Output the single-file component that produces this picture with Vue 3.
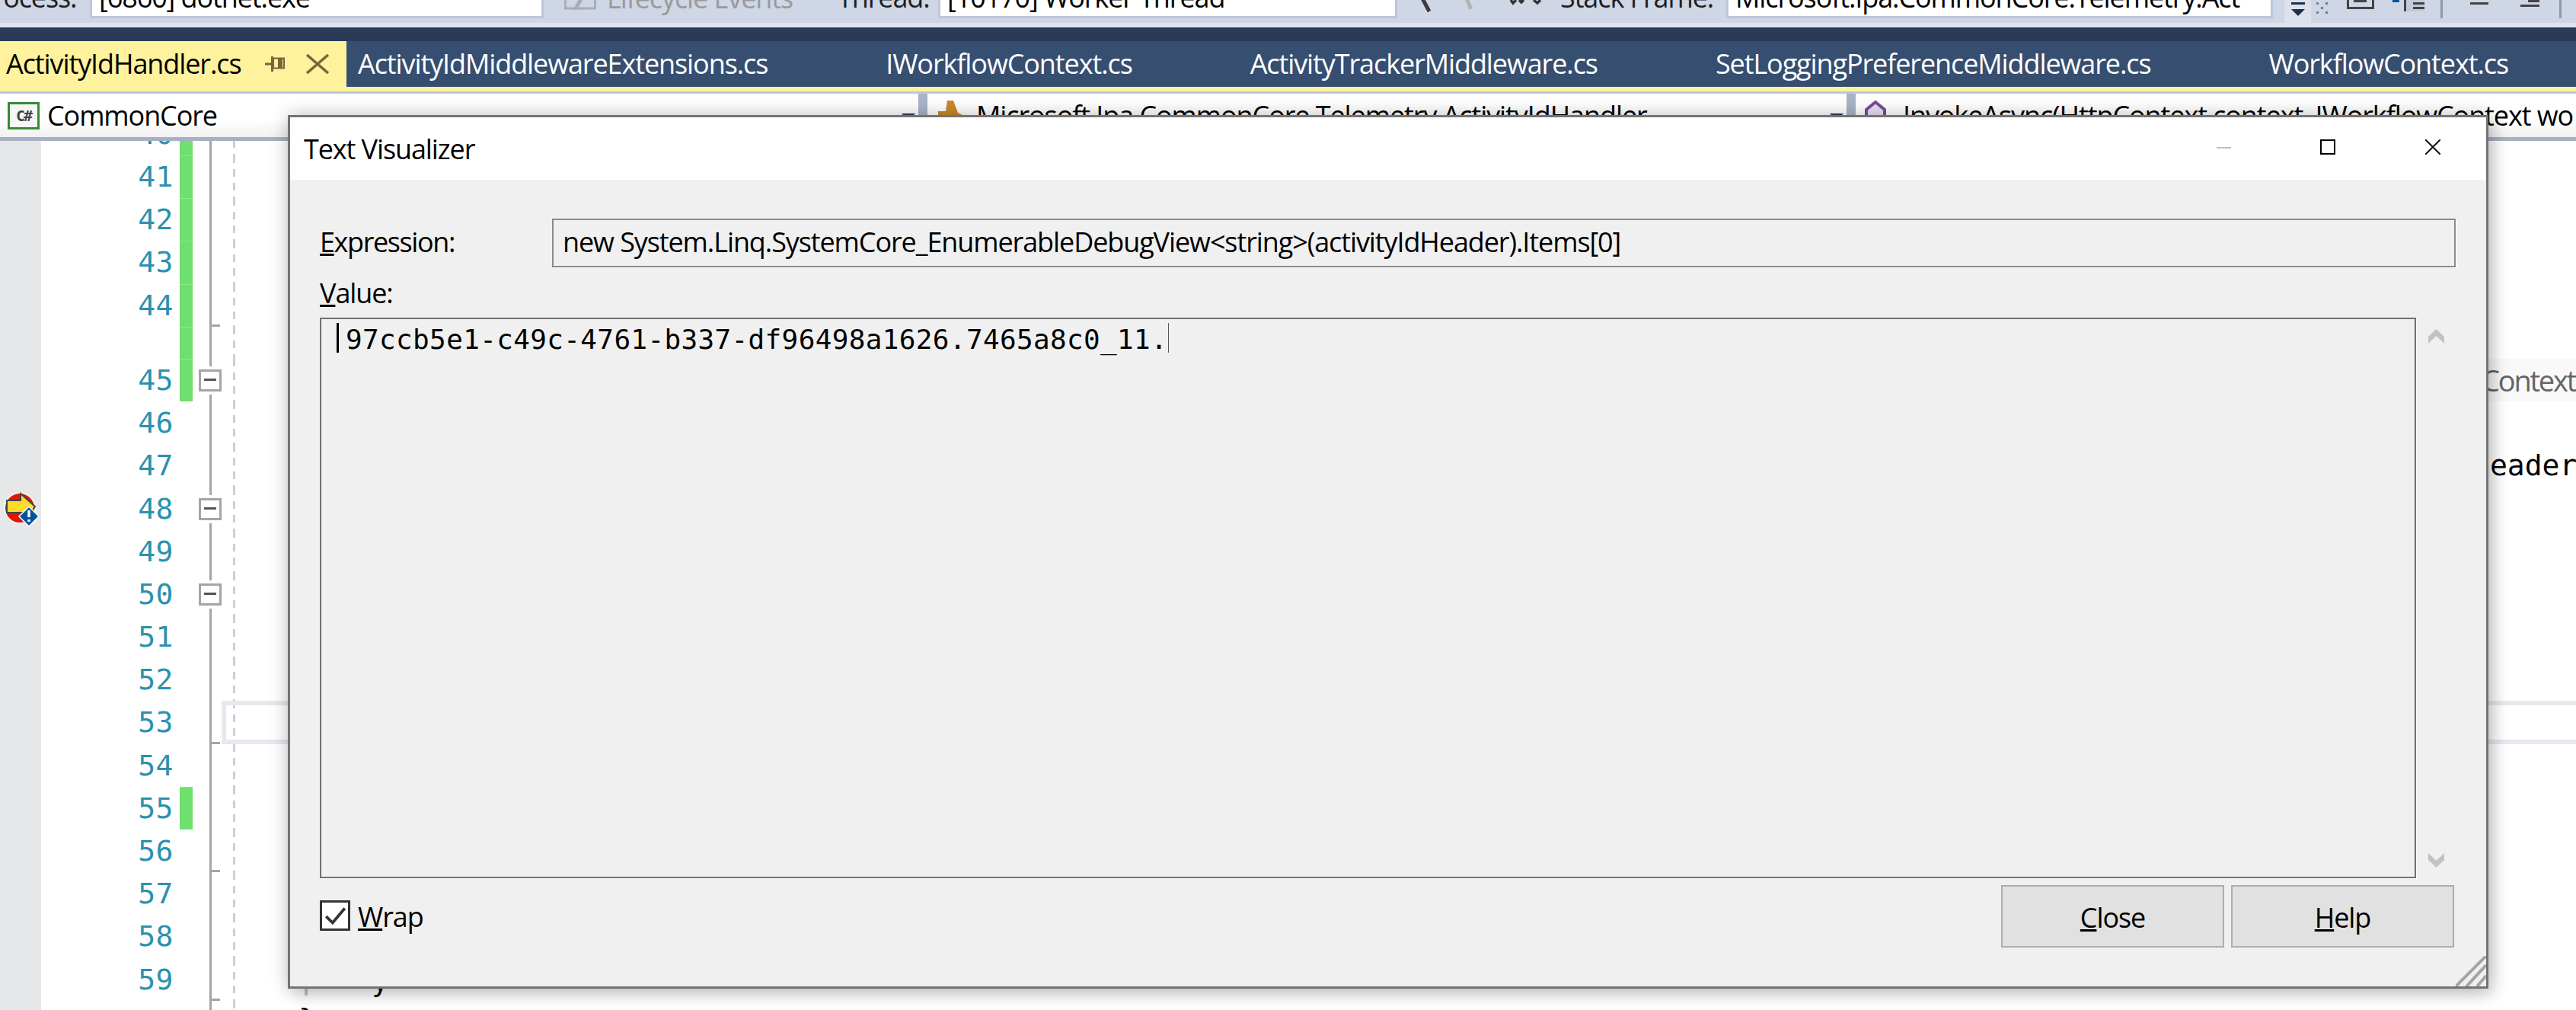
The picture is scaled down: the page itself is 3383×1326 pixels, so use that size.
<script setup>
const rows = [
  { n: 40, h: 56.2, ch: true, fold: 'line' },
  { n: 41, h: 56.2, ch: true, fold: 'line' },
  { n: 42, h: 56.2, ch: true, fold: 'line' },
  { n: 43, h: 56.2, ch: true, fold: 'line' },
  { n: 44, h: 56.2, ch: true, fold: 'tick' },
  { n: '', h: 42.2, ch: true, fold: 'line' },
  { n: 45, h: 56.2, ch: true, fold: 'box', code: 'Context', cls: 'dim' },
  { n: 46, h: 56.2, fold: 'line' },
  { n: 47, h: 56.2, fold: 'line', code: 'Header', cls: 'dark' },
  { n: 48, h: 56.2, fold: 'box', bp: true },
  { n: 49, h: 56.2, fold: 'line' },
  { n: 50, h: 56.2, fold: 'box' },
  { n: 51, h: 56.2, fold: 'line' },
  { n: 52, h: 56.2, fold: 'line' },
  { n: 53, h: 56.2, fold: 'tick', current: true },
  { n: 54, h: 56.2, fold: 'line' },
  { n: 55, h: 56.2, ch: true, fold: 'line' },
  { n: 56, h: 56.2, fold: 'tick' },
  { n: 57, h: 56.2, fold: 'line' },
  { n: 58, h: 56.2, fold: 'line' },
  { n: 59, h: 56.2, fold: 'tick' },
  { n: 60, h: 56.2, fold: 'line' }
]
const tabs = [
  'ActivityIdMiddlewareExtensions.cs',
  'IWorkflowContext.cs',
  'ActivityTrackerMiddleware.cs',
  'SetLoggingPreferenceMiddleware.cs',
  'WorkflowContext.cs'
]
</script>

<template>
  <div class="ide">
    <header class="toolbar">
      <span class="tb-label first">Process:</span>
      <span class="combo c1"><span class="combo-text">[6860] dotnet.exe</span></span>
      <span class="lifecycle">
        <svg class="lc-ico" viewBox="0 0 42 25"><rect x="1.5" y="-8" width="39" height="31" fill="none" stroke="#a9adb6" stroke-width="3"/><path d="M14 25 27 2" stroke="#a9adb6" stroke-width="5"/></svg>
        Lifecycle Events
      </span>
      <span class="tb-label thread">Thread:</span>
      <span class="combo c2"><span class="combo-text">[10170] Worker Thread</span></span>
      <svg class="flags" viewBox="0 0 214 30">
        <path d="M33 -2 42 15" stroke="#3c3c3c" stroke-width="5" fill="none"/>
        <path d="M91 -2 97 12" stroke="#b4b4b4" stroke-width="5" fill="none"/>
        <path d="M149 0l3 4 4-4M160 0l3 3 3-3M179 0l5 4 4-4" stroke="#333" stroke-width="3.5" fill="none"/>
      </svg>
      <span class="tb-label frame">Stack Frame:</span>
      <span class="combo c3"><span class="combo-text">Microsoft.Ipa.CommonCore.Telemetry.Act</span></span>
      <span class="overflow">
        <i class="ov-dash"></i>
        <i class="ov-tri"></i>
      </span>
      <svg class="tb-icons" viewBox="0 0 348 30">
        <g fill="#6b7a94">
          <rect x="7" y="3" width="3" height="3"/><rect x="19" y="3" width="3" height="3"/>
          <rect x="13" y="9" width="3" height="3"/>
          <rect x="7" y="15" width="3" height="3"/><rect x="19" y="15" width="3" height="3"/>
        </g>
        <path d="M48.5 -4v14.5h33V-4" fill="none" stroke="#444" stroke-width="3"/>
        <rect x="56" y="0" width="17" height="3" fill="#444"/>
        <rect x="107" y="0" width="9" height="3" fill="#00539c"/>
        <rect x="125" y="0" width="24" height="15" fill="#c3cad9"/>
        <rect x="122" y="0" width="3" height="15" fill="#444"/>
        <rect x="134" y="3" width="15" height="3" fill="#444"/>
        <rect x="134" y="9" width="15" height="3" fill="#444"/>
        <rect x="170" y="0" width="3" height="24" fill="#8d98ac"/>
        <rect x="209" y="3" width="24" height="3" fill="#444"/>
        <rect x="285" y="0" width="15" height="3" fill="#444"/>
        <rect x="275" y="6" width="25" height="3" fill="#444"/>
        <rect x="326" y="0" width="3" height="24" fill="#8d98ac"/>
      </svg>
    </header>
    <div class="band-light"></div>
    <div class="band-dark"></div>

    <nav class="tabs">
      <div class="tab active">
        <span>ActivityIdHandler.cs</span>
        <svg class="pin" viewBox="0 0 26 20"><path d="M0 10h8" stroke="#75663c" stroke-width="3"/><rect x="8" y="0" width="3" height="20" fill="#75663c"/><path d="M11 2.5h14v13H11z" fill="none" stroke="#75663c" stroke-width="2"/><rect x="17" y="3" width="6" height="12" fill="#75663c"/></svg>
        <svg class="tab-x" viewBox="0 0 32 26"><path d="M2 1 30 25M30 1 2 25" stroke="#75663c" stroke-width="3.5" fill="none"/></svg>
      </div>
      <div class="tab-rest">
        <span v-for="t in tabs" :key="t" class="tab">{{ t }}</span>
      </div>
    </nav>
    <div class="band-yellow"></div>
    <div class="band-blue"></div>

    <div class="navbar">
      <div class="nav-cell n1">
        <span class="cs-ico">C#</span>
        <span>CommonCore</span>
        <i class="nav-arrow"></i>
      </div>
      <div class="nav-cell n2">
        <svg class="nav-ico" viewBox="0 0 42 40"><path d="M14 0h8l6 16 8 4v8H2V14h10z" fill="#c98a2a"/><rect x="8" y="28" width="6" height="10" fill="#c98a2a"/><rect x="26" y="28" width="6" height="10" fill="#c98a2a"/></svg>
        <span>Microsoft.Ipa.CommonCore.Telemetry.ActivityIdHandler</span>
        <i class="nav-arrow"></i>
      </div>
      <div class="nav-cell n3">
        <svg class="nav-ico small" viewBox="0 0 28 40"><path d="M14 2 26 12v22H2V12z" fill="#e8dff0" stroke="#7a4b9d" stroke-width="4"/></svg>
        <span>InvokeAsync(HttpContext context, IWorkflowContext wo</span>
      </div>
    </div>
    <div class="band-grey"></div>

    <main class="editor">
      <div class="editor-rows">
        <div v-for="(r, i) in rows" :key="i" class="row" :class="{ current: r.current }" :style="{ height: r.h + 'px' }">
          <div class="gutter">
            <svg v-if="r.bp" class="bp" viewBox="0 0 46 46">
              <circle cx="21" cy="21" r="20" fill="#e51400" stroke="#f5f5f5" stroke-width="2"/>
              <path d="M4 27V11h18V2l19 17-5 8z" fill="#ffd92e" stroke="#444" stroke-width="2"/>
              <path d="M33 19 46 32 33 45 20 32z" fill="#00539c" stroke="#fff" stroke-width="1.5"/>
              <path d="M33 24v9M33 36v3" stroke="#fff" stroke-width="3.5"/>
            </svg>
          </div>
          <div class="num">{{ r.n }}</div>
          <div class="change" :class="{ on: r.ch }"></div>
          <div class="fold" :class="r.fold"><i v-if="r.fold === 'box'" class="fold-box"></i></div>
          <div class="code" :class="r.cls">
            <span v-if="r.code" class="code-text">{{ r.code }}</span>
          </div>
        </div>
      </div>
      <span class="stray guide"></span>
      <span class="stray descender">y</span>
      <span class="stray brace">}</span>
    </main>

    <section class="dialog">
      <div class="title-bar">
        <span class="title">Text Visualizer</span>
        <i class="win-min"></i>
        <i class="win-max"></i>
        <svg class="win-x" viewBox="0 0 20 20"><path d="M0 0 20 20M20 0 0 20" stroke="#111" stroke-width="2"/></svg>
      </div>
      <div class="body">
        <div class="expr-row">
          <label class="lbl"><u>E</u>xpression:</label>
          <div class="expr-box">new System.Linq.SystemCore_EnumerableDebugView&lt;string&gt;(activityIdHeader).Items[0]</div>
        </div>
        <label class="lbl value-lbl"><u>V</u>alue:</label>
        <div class="value-row">
          <div class="value-box">
            <i class="caret"></i><span class="val-text">97ccb5e1-c49c-4761-b337-df96498a1626.7465a8c0_11.</span><i class="caret thin"></i>
          </div>
          <div class="scroll">
            <svg viewBox="0 0 21 19"><path d="M0 10 10.5 0 21 10v9L10.5 9 0 19z" fill="#c2c2c2"/></svg>
            <svg viewBox="0 0 21 19"><path d="M0 0 10.5 10 21 0v9L10.5 19 0 9z" fill="#c2c2c2"/></svg>
          </div>
        </div>
        <div class="foot">
          <label class="wrap">
            <span class="check"><svg viewBox="0 0 32 32"><path d="M5 17 13 25 28 7" stroke="#333" stroke-width="3.5" fill="none"/></svg></span>
            <span><u>W</u>rap</span>
          </label>
          <div class="btns">
            <button class="btn"><u>C</u>lose</button>
            <button class="btn"><u>H</u>elp</button>
          </div>
        </div>
        <svg class="grip" viewBox="0 0 40 40"><path d="M0 40 40 0M14 40 40 12M28 40 40 26" stroke="#a3a3a3" stroke-width="4"/></svg>
      </div>
    </section>
  </div>
</template>

<style scoped>
.ide { position: relative; width: 3383px; height: 1326px; overflow: hidden; background: #fff; font-family: "Open Sans", "Noto Sans", sans-serif; font-size: 36px; color: #000; letter-spacing: -1.1px; }

.toolbar { height: 30px; background: #cfd6e5; display: flex; align-items: flex-start; overflow: hidden; white-space: nowrap; }
.tb-label { line-height: 30px; margin-top: -18px; flex: none; color: #1e1e1e; }
.tb-label.first { width: 118px; margin-left: -30px; }
.combo { flex: none; height: 24px; background: #fff; box-shadow: inset 3px 0 0 #bcc7db, inset 0 -3px 0 #bcc7db, inset -3px 0 0 #bcc7db; padding-left: 12px; box-sizing: border-box; }
.combo-text { display: block; line-height: 0; margin-top: -3px; }
.c1 { width: 596px; margin-left: 30px; }
.c2 { width: 603px; }
.c3 { width: 718px; margin-left: 20px; }
.lifecycle { flex: none; display: flex; align-items: center; gap: 14px; margin-left: 27px; width: 359px; height: 0; margin-top: -3px; color: #9a9a9a; }
.lc-ico { width: 42px; height: 25px; position: relative; top: 3px; flex: none; }
.tb-label.thread { width: 132px; }
.flags { width: 214px; height: 30px; flex: none; }
.tb-label.frame { width: 198px; }
.overflow { flex: none; width: 35px; height: 30px; margin-left: 15px; background: #dde1ec; position: relative; }
.ov-dash { position: absolute; left: 9px; top: 3px; width: 18px; height: 3px; background: #1f2f4c; }
.ov-tri { position: absolute; left: 9px; top: 12px; border: 9px solid transparent; border-top: 9px solid #1f2f4c; border-bottom: 0; }
.tb-icons { width: 348px; height: 30px; flex: none; }

.band-light { height: 6px; background: #dfe3ee; }
.band-dark { height: 18px; background: #2a3a58; }
.tabs { height: 60px; background: #364e70; display: flex; color: #fff; white-space: nowrap; align-items: stretch; }
.tab { line-height: 60px; flex: none; }
.tab.active { width: 455px; box-sizing: border-box; padding-left: 8px; background: #fff29d; color: #000; display: flex; align-items: center; }
.pin { width: 26px; height: 20px; margin-left: 32px; flex: none; }
.tab-x { width: 32px; height: 26px; margin-left: 27px; flex: none; }
.tab-rest { display: flex; gap: 155px; padding-left: 15px; }
.band-yellow { height: 6px; background: #fff29d; }
.band-blue { height: 3px; background: #bcc7db; }

.navbar { height: 57px; display: flex; background: #a9b4c8; gap: 12px; white-space: nowrap; }
.nav-cell { flex: none; display: flex; align-items: center; background: linear-gradient(#fff 60%, #f1f1f1); position: relative; overflow: hidden; box-sizing: border-box; }
.n1 { width: 1206px; padding-left: 10px; }
.n2 { width: 1207px; padding-left: 12px; }
.n3 { flex: 1; padding-left: 12px; }
.cs-ico { width: 42px; height: 36px; box-sizing: border-box; border: 3px solid #388a34; background: #f6f6f6; color: #424242; font: bold 20px/30px "DejaVu Sans Mono", monospace; letter-spacing: -2px; text-align: center; margin-right: 10px; flex: none; }
.nav-ico { width: 42px; height: 40px; margin-right: 10px; flex: none; }
.nav-ico.small { width: 28px; margin-right: 22px; }
.nav-arrow { position: absolute; right: 4px; top: 26px; border: 9px solid transparent; border-top: 10px solid #2c3a55; border-bottom: 0; }
.band-grey { height: 5px; background: #a6b1c4; }

.editor { position: relative; height: 1141px; overflow: hidden; background: #fff; }
.editor-rows { margin-top: -37.2px; }
.row { display: flex; position: relative; box-sizing: border-box; }
.gutter { width: 54px; flex: none; background: #e6e7e8; position: relative; }
.bp { position: absolute; left: 5px; top: 6px; width: 46px; height: 46px; }
.num { width: 174px; flex: none; text-align: right; color: #2b91af; font: 38px/56px "DejaVu Sans Mono", monospace; letter-spacing: 0.5px; }
.change { width: 17px; margin-left: 8px; flex: none; box-sizing: border-box; }
.change.on { background: #6ee06e; border-top: 1px solid #8ce78c; }
.fold { width: 38px; flex: none; position: relative; }
.fold::before { content: ""; position: absolute; left: 22px; top: 0; bottom: 0; width: 3px; background: #a5a5a5; }
.fold.tick::after { content: ""; position: absolute; left: 22px; bottom: 0; width: 14px; height: 3px; background: #a5a5a5; }
.fold.box::before { background: linear-gradient(#a5a5a5 0 10px, transparent 10px 47px, #a5a5a5 47px); }
.fold-box { position: absolute; left: 8px; top: 14px; width: 30px; height: 29px; box-sizing: border-box; border: 3px solid #a5a5a5; background: #fff; }
.fold-box::after { content: ""; position: absolute; left: 4px; top: 9px; width: 16px; height: 3px; background: #555; }
.code { flex: 1; position: relative; background: repeating-linear-gradient(#cfcfcf 0 10px, transparent 10px 18px) no-repeat 15px 0 / 3px 100%; padding-left: 2956px; font: 38px/56px "DejaVu Sans Mono", monospace; white-space: nowrap; overflow: hidden; letter-spacing: 0; }
.row.current .code { box-shadow: inset 0 6px 0 #e8e8f0, inset 0 -6px 0 #e8e8f0, inset 6px 0 0 #e8e8f0; }
.code.dim { padding-left: 2920px; color: #666; font: 38px/56px "Open Sans", sans-serif; letter-spacing: -2.2px; }
.dim .code-text { display: inline-block; background: #f9f9f9; padding-left: 48px; padding-right: 60px; height: 56px; }
.stray { position: absolute; font: 38px/40px "DejaVu Sans Mono", monospace; letter-spacing: 0; }
.guide { left: 400px; top: 1110px; width: 4px; height: 12px; background: #c4c4c4; }
.descender { left: 488px; top: 1083px; }
.brace { left: 392px; top: 1133px; }

.dialog { position: absolute; left: 378px; top: 151px; width: 2890px; height: 1147px; box-sizing: border-box; border: 3px solid #737373; background: #f0f0f0; box-shadow: 0 0 24px rgba(0,0,0,.22), 6px 8px 20px rgba(0,0,0,.14); display: flex; flex-direction: column; letter-spacing: -1.1px; }
.title-bar { height: 82px; flex: none; background: #fff; position: relative; display: flex; align-items: center; padding-left: 18px; }
.win-min { position: absolute; left: 2530px; top: 39px; width: 19px; height: 2px; background: #c0c0c0; }
.win-max { position: absolute; left: 2666px; top: 29px; width: 20px; height: 20px; box-sizing: border-box; border: 2px solid #000; }
.win-x { position: absolute; left: 2804px; top: 29px; width: 20px; height: 20px; }
.body { flex: 1; position: relative; display: flex; flex-direction: column; padding: 51px 39px 0; }
.expr-row { display: flex; align-items: center; }
.lbl { display: block; line-height: 62px; }
.expr-row .lbl { width: 305px; flex: none; padding-bottom: 2px; letter-spacing: -1.4px; }
.expr-box { width: 2500px; height: 64px; box-sizing: border-box; border: 2px solid #8a8a8a; box-shadow: 1px 1px 0 #fff; padding-left: 12px; line-height: 58px; white-space: nowrap; }
.value-lbl { margin-top: 4px; line-height: 60px; margin-bottom: 2px; }
.value-row { display: flex; }
.value-box { width: 2753px; height: 736px; box-sizing: border-box; border: 2px solid #707070; box-shadow: 1px 1px 0 #fff; display: flex; align-items: flex-start; padding: 5px 0 0 20px; font: 36px/44px "DejaVu Sans Mono", monospace; letter-spacing: 0.35px; }
.caret { width: 3px; height: 39px; background: #000; margin-right: 9px; flex: none; }
.caret.thin { width: 1px; margin: 0 0 0 1px; background: #555; }
.scroll { flex: 1; display: flex; flex-direction: column; justify-content: space-between; align-items: flex-start; padding: 15px 0 14px 16px; }
.scroll svg { width: 21px; height: 19px; }
.foot { display: flex; justify-content: space-between; margin-top: 9px; padding-right: 3px; }
.wrap { display: flex; align-items: center; gap: 10px; height: 82px; }
.check { width: 40px; height: 40px; box-sizing: border-box; border: 3.5px solid #333; background: #fff; flex: none; display: block; margin-top: -3px; }
.check svg { display: block; width: 100%; height: 100%; }
.btns { display: flex; gap: 9px; }
.btn { width: 293px; height: 82px; box-sizing: border-box; border: 2px solid #adadad; background: #e1e1e1; font: inherit; letter-spacing: inherit; color: #000; padding: 3px 0 0; }
.grip { position: absolute; right: 0; bottom: 0; width: 40px; height: 40px; }
</style>
